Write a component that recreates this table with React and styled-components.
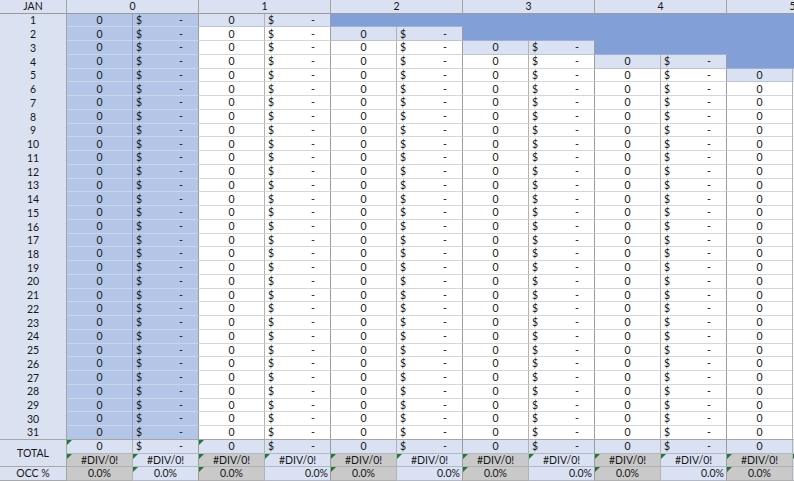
import React from 'react';
import styled, { createGlobalStyle } from 'styled-components';

const GlobalStyle = createGlobalStyle`
  html, body { margin: 0; padding: 0; background: #ffffff; }
  body { font-family: Lato, "Liberation Sans", sans-serif; }
  #root { width: 794px; height: 481px; overflow: hidden; }
`;

const tones = {
  white: { bg: '#ffffff', h: '#d6d6d6' },
  mid: { bg: '#b4c6e7', h: '#cad5eb' },
  pale: { bg: '#d9e1f2', h: '#bcc4d3' },
  gray: { bg: '#c9c9c9', h: '#b3b6bc' },
};

const edgeColor = {
  inner: '#b3b3b3',
  group: '#9c9c9c',
  midInner: '#8fa1c4',
};

const Viewport = styled.div`
  width: 794px;
  height: 481px;
  overflow: hidden;
`;

const Sheet = styled.div`
  display: grid;
  grid-template-columns: 67px repeat(12, 66px);
  grid-template-rows: repeat(35, 1fr);
  width: 859px;
  height: 481px;
  font-size: 10.5px;
  color: #161616;
`;

const BaseCell = styled.div`
  box-sizing: border-box;
  position: relative;
  display: flex;
  align-items: center;
  white-space: nowrap;
  overflow: hidden;
  line-height: 1;
  grid-column: span ${(p) => p.$span || 1};
`;

const HeaderCell = styled(BaseCell)`
  justify-content: center;
  background: #d9e1f2;
  border-right: 1px solid #a4a4a4;
  border-bottom: 1px solid #9a9a9a;
`;

const RowLabel = styled(BaseCell)`
  justify-content: center;
  background: #dae2f2;
  border-right: 1px solid #a4a4a4;
  border-bottom: ${(p) => (p.$line ? '1px solid #a8a8a8' : 'none')};
  grid-row: span ${(p) => p.$rows || 1};
`;

const DataCell = styled(BaseCell)`
  justify-content: ${(p) => p.$align || 'center'};
  padding: 0 ${(p) => (p.$align === 'flex-end' ? '2px' : '3px')} 0 3px;
  background: ${(p) => tones[p.$tone].bg};
  border-right: 1px solid ${(p) => edgeColor[p.$edge]};
  border-bottom: 1px solid ${(p) => p.$bottom || tones[p.$tone].h};
`;

const AcctCell = styled(DataCell)`
  justify-content: space-between;
  padding: 0 15px 0 3px;
`;

const DarkBlock = styled(BaseCell)`
  background: #82a0d7;
  border-bottom: ${(p) => (p.$last ? '1px solid #9fb1d5' : 'none')};
`;

const Flag = styled.span`
  position: absolute;
  top: 0;
  left: 0;
  width: 0;
  height: 0;
  border-top: 5px solid #1e7b36;
  border-right: 5px solid transparent;
`;

const groups = [0, 1, 2, 3, 4, 5];
const days = Array.from({ length: 31 }, (_, i) => i + 1);

function toneFor(g, d) {
  if (g === 0) return 'mid';
  if (d === g) return 'pale';
  return 'white';
}

function DayRow({ d }) {
  const last = d === 31;
  const cells = [];
  groups.forEach((g) => {
    if (g > 0 && d < g) {
      cells.push(<DarkBlock key={`dk${g}`} $span={2} $last={d === g - 1} />);
      return;
    }
    const tone = toneFor(g, d);
    const bottom = last ? '#a6a6a6' : undefined;
    cells.push(
      <DataCell key={`c${g}`} $tone={tone} $edge={g === 0 ? 'midInner' : 'inner'} $bottom={bottom}>
        0
      </DataCell>
    );
    cells.push(
      <AcctCell key={`a${g}`} $tone={tone} $edge="group" $bottom={bottom}>
        <span>$</span>
        <span>-</span>
      </AcctCell>
    );
  });
  return (
    <>
      <RowLabel $line={last}>{d}</RowLabel>
      {cells}
    </>
  );
}

export default function App() {
  return (
    <>
      <GlobalStyle />
      <Viewport>
        <Sheet>
          <HeaderCell>JAN</HeaderCell>
          {groups.map((g) => (
            <HeaderCell key={`h${g}`} $span={2}>
              {g}
            </HeaderCell>
          ))}

          {days.map((d) => (
            <DayRow key={d} d={d} />
          ))}

          <RowLabel $rows={2} $line>
            TOTAL
          </RowLabel>
          {groups.map((g) => (
            <React.Fragment key={`t${g}`}>
              <DataCell $tone="pale" $edge="inner" $bottom="#b3b9c4">
                {g < 2 && <Flag />}0
              </DataCell>
              <AcctCell $tone="pale" $edge="group" $bottom="#b3b9c4">
                <span>$</span>
                <span>-</span>
              </AcctCell>
            </React.Fragment>
          ))}

          {groups.map((g) => (
            <React.Fragment key={`e${g}`}>
              <DataCell $tone="gray" $edge="inner" $bottom="#b0b0b0">
                <Flag />
                #DIV/0!
              </DataCell>
              <DataCell $tone="pale" $edge="group" $bottom="#b3b9c4">
                <Flag />
                #DIV/0!
              </DataCell>
            </React.Fragment>
          ))}

          <RowLabel $line>OCC %</RowLabel>
          {groups.map((g) => (
            <React.Fragment key={`o${g}`}>
              <DataCell $tone="gray" $edge="inner" $bottom="#b0b0b0">
                {g > 0 && <Flag />}
                0.0%
              </DataCell>
              <DataCell
                $tone="pale"
                $edge="group"
                $bottom="#b3b9c4"
                $align={g === 0 ? 'center' : 'flex-end'}
              >
                {g === 0 && <Flag />}
                0.0%
              </DataCell>
            </React.Fragment>
          ))}
        </Sheet>
      </Viewport>
    </>
  );
}
